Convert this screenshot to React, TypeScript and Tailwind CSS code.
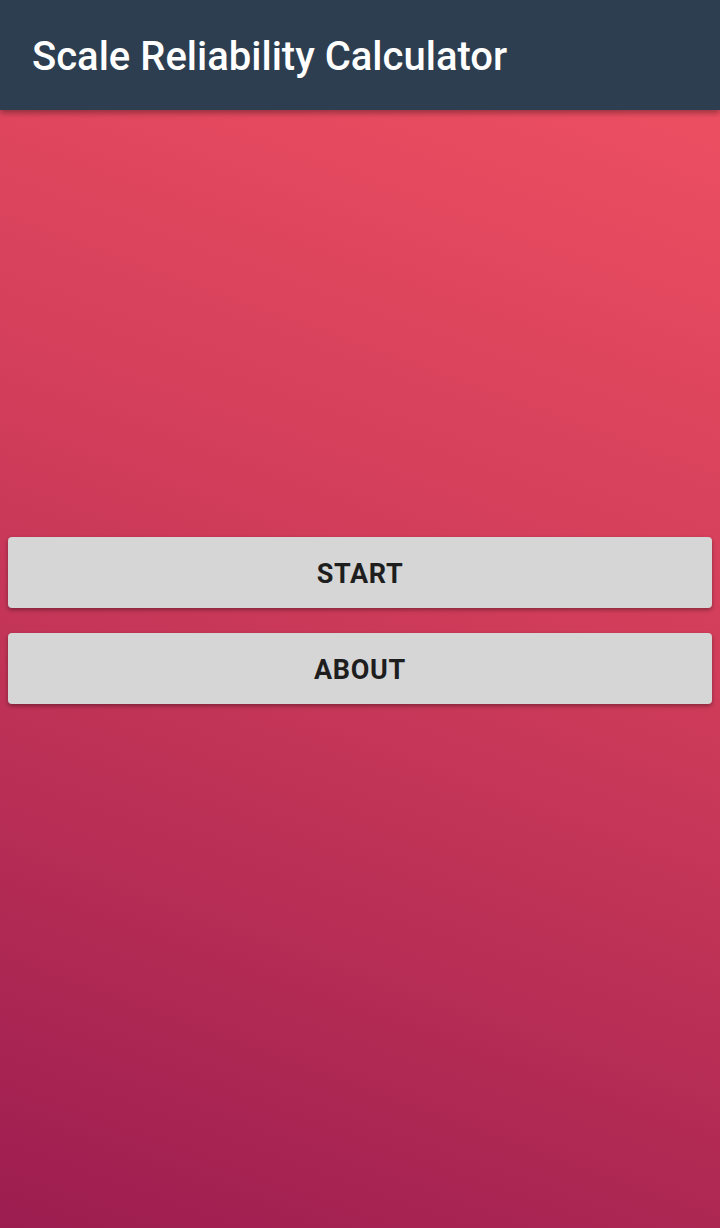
import React from 'react';

const MenuButton = ({ label }: { label: string }) => (
  <button
    type="button"
    className="w-full h-[71px] pt-[4px] rounded-[4px] bg-[#d6d6d6] text-[#1e1e1e] text-[27px] font-bold tracking-wide shadow-[0_2px_4px_rgba(0,0,0,0.35)]"
  >
    {label}
  </button>
);

export default function App() {
  return (
    <div className="w-[720px] h-[1228px] flex flex-col font-['Roboto',sans-serif] bg-[linear-gradient(200deg,#f25263,#d13d5a_45%,#9c1d50)]">
      <header className="h-[110px] shrink-0 bg-[#2d3e50] flex items-center px-8 shadow-[0_3px_6px_rgba(0,0,0,0.35)] relative z-10">
        <h1 className="text-white text-[40px] font-medium pt-1">Scale Reliability Calculator</h1>
      </header>
      <main className="flex-1 flex flex-col justify-center gap-[25px] px-2 pb-[98px]">
        <MenuButton label="START" />
        <MenuButton label="ABOUT" />
      </main>
    </div>
  );
}
